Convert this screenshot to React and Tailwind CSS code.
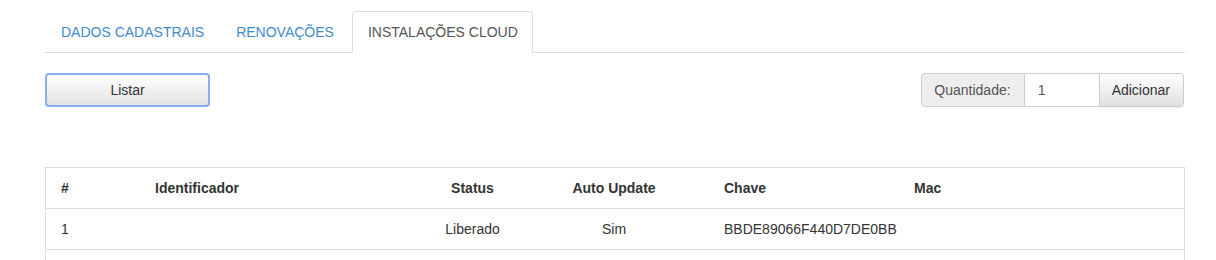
import { useState } from 'react';

const tabs = ['DADOS CADASTRAIS', 'RENOVAÇÕES', 'INSTALAÇÕES CLOUD'];

const rows = [
  { id: '1', identificador: '', status: 'Liberado', autoUpdate: 'Sim', chave: 'BBDE89066F440D7DE0BB', mac: '' },
];

const cols = 'grid grid-cols-[94px_262px_141px_142px_214px_1fr]';

export default function App() {
  const [active, setActive] = useState(2);
  const [qtd, setQtd] = useState('1');

  return (
    <div className="min-h-[260px] bg-white text-[14px] leading-5 text-[#333]" style={{ fontFamily: '"Liberation Sans", Arial, sans-serif' }}>
      <div className="ml-[45px] w-[1140px] pt-[11px]">
        {/* Tabs */}
        <ul className="flex border-b border-[#ddd]">
          {tabs.map((t, i) => (
            <li key={t} className="mr-[2px] -mb-px">
              <button
                onClick={() => setActive(i)}
                className={
                  i === active
                    ? 'rounded-t-[4px] border border-[#ddd] border-b-transparent bg-white pl-[15px] pr-[14px] py-[10px] text-[#555]'
                    : i === 0
                    ? 'rounded-t-[4px] border border-transparent pl-[15px] pr-[13px] py-[10px] text-[#428bca]'
                    : 'rounded-t-[4px] border border-transparent px-[15px] py-[10px] text-[#428bca]'
                }
              >
                {t}
              </button>
            </li>
          ))}
        </ul>

        {/* Actions */}
        <div className="mt-[20px] flex items-start justify-between">
          <button className="h-[34px] w-[165px] rounded-[4px] border-2 border-[#86aef0] bg-gradient-to-b from-white to-[#e2e2e2] text-[#333]">
            Listar
          </button>
          <div className="mr-px flex h-[34px]">
            <span className="flex items-center rounded-l-[4px] border border-[#ccc] bg-[#eee] pl-[12px] pr-[13px] text-[#555]">Quantidade:</span>
            <input
              value={qtd}
              onChange={(e) => setQtd(e.target.value)}
              className="w-[74px] border-y border-[#ccc] bg-white px-[13px] text-[#555] outline-none"
            />
            <button className="rounded-r-[4px] border border-[#ccc] bg-gradient-to-b from-white to-[#e0e0e0] pl-[12px] pr-[13px] text-[#333] shadow-[0_1px_1px_rgba(0,0,0,0.06)]">
              Adicionar
            </button>
          </div>
        </div>

        {/* Table */}
        <div className="mt-[60px] border-x border-t border-[#ddd]">
          <div className={`${cols} h-[41px] items-center border-b border-[#ddd] font-bold`}>
            <div className="pl-[15px]">#</div>
            <div className="pl-[15px]">Identificador</div>
            <div className="text-center">Status</div>
            <div className="text-center">Auto Update</div>
            <div className="pl-[39px]">Chave</div>
            <div className="pl-[15px]">Mac</div>
          </div>
          {rows.map((r) => (
            <div key={r.id} className={`${cols} h-[41px] items-center border-b border-[#ddd]`}>
              <div className="pl-[15px]">{r.id}</div>
              <div className="pl-[15px]">{r.identificador}</div>
              <div className="text-center">{r.status}</div>
              <div className="text-center">{r.autoUpdate}</div>
              <div className="pl-[39px]">{r.chave}</div>
              <div className="pl-[15px]">{r.mac}</div>
            </div>
          ))}
          <div className="h-[20px]" />
        </div>
      </div>
    </div>
  );
}
